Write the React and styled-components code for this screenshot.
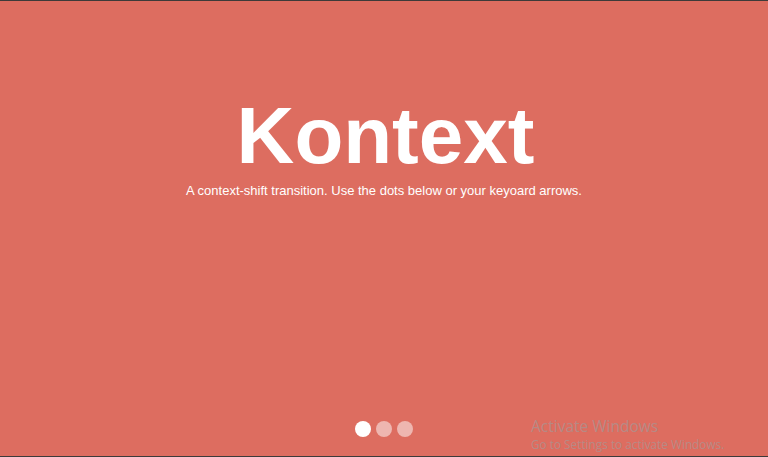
import styled, { createGlobalStyle } from "styled-components";

const GlobalStyle = createGlobalStyle`
  html, body {
    margin: 0;
    padding: 0;
    height: 100%;
  }
  #root {
    height: 100%;
  }
`;

const slides = [
  {
    title: "Kontext",
    text: "A context-shift transition. Use the dots below or your keyoard arrows.",
  },
  { title: "Slide 2", text: "" },
  { title: "Slide 3", text: "" },
];

const App = () => {
  const current = 0;
  return (
    <>
      <GlobalStyle />
      <Stage>
        <Slide>
          <Title>{slides[current].title}</Title>
          <Lead>{slides[current].text}</Lead>
        </Slide>
        <Dots>
          {slides.map((s, i) => (
            <Dot key={i} $active={i === current} />
          ))}
        </Dots>
        <Watermark>
          <WatermarkTitle>Activate Windows</WatermarkTitle>
          <WatermarkText>Go to Settings to activate Windows.</WatermarkText>
        </Watermark>
      </Stage>
    </>
  );
};

export default App;

const Stage = styled.div`
  position: relative;
  height: 100vh;
  box-sizing: border-box;
  display: flex;
  flex-direction: column;
  align-items: center;
  background: #dd6d60;
  border-top: 1px solid #3d3a39;
  border-bottom: 1px solid #3d3a39;
  font-family: "Liberation Sans", Arial, sans-serif;
  color: #fff;
  overflow: hidden;
`;

const Slide = styled.div`
  display: flex;
  flex-direction: column;
  align-items: center;
  gap: 8px;
  padding-top: 95px;
`;

const Title = styled.h1`
  margin: 0;
  font-size: 80px;
  line-height: 80px;
  font-weight: 700;
  padding-left: 3px;
`;

const Lead = styled.p`
  margin: 0;
  font-size: 13px;
  line-height: 13px;
`;

const Dots = styled.div`
  margin-top: auto;
  padding-bottom: 19px;
  display: flex;
  gap: 5px;
`;

const Dot = styled.span`
  width: 16px;
  height: 16px;
  border-radius: 50%;
  cursor: pointer;
  background: ${(p) => (p.$active ? "#ffffff" : "rgba(255, 255, 255, 0.5)")};
`;

const Watermark = styled.div`
  position: absolute;
  left: 531px;
  bottom: 4px;
  font-family: "Open Sans", "Noto Sans", sans-serif;
  color: rgba(160, 155, 155, 0.65);
  pointer-events: none;
`;

const WatermarkTitle = styled.div`
  font-size: 15.5px;
  line-height: 20px;
`;

const WatermarkText = styled.div`
  font-size: 11.8px;
  line-height: 16px;
`;
